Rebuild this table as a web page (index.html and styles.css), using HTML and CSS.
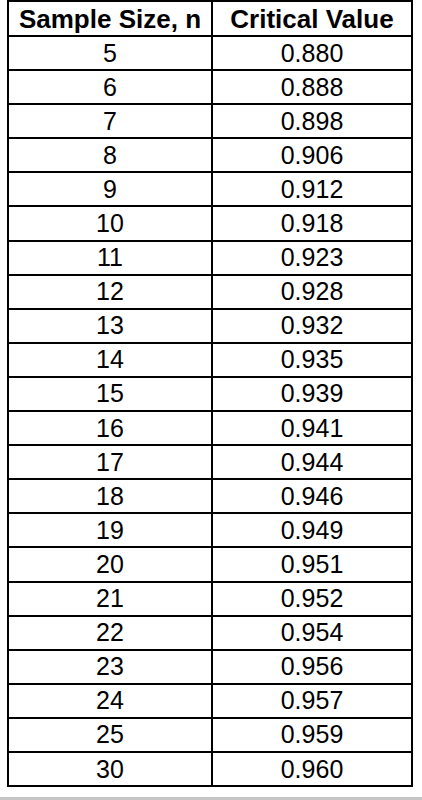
FILE: index.html
```html
<!DOCTYPE html>
<html>
<head>
<meta charset="utf-8">
<link rel="stylesheet" href="styles.css">
</head>
<body>
<table class="cv-table">
<thead>
<tr class="head-row"><th>Sample Size, n</th><th>Critical Value</th></tr>
</thead>
<tbody>
<tr><td>5</td><td>0.880</td></tr>
<tr><td>6</td><td>0.888</td></tr>
<tr><td>7</td><td>0.898</td></tr>
<tr><td>8</td><td>0.906</td></tr>
<tr><td>9</td><td>0.912</td></tr>
<tr><td>10</td><td>0.918</td></tr>
<tr><td>11</td><td>0.923</td></tr>
<tr><td>12</td><td>0.928</td></tr>
<tr><td>13</td><td>0.932</td></tr>
<tr><td>14</td><td>0.935</td></tr>
<tr><td>15</td><td>0.939</td></tr>
<tr><td>16</td><td>0.941</td></tr>
<tr><td>17</td><td>0.944</td></tr>
<tr><td>18</td><td>0.946</td></tr>
<tr><td>19</td><td>0.949</td></tr>
<tr><td>20</td><td>0.951</td></tr>
<tr><td>21</td><td>0.952</td></tr>
<tr><td>22</td><td>0.954</td></tr>
<tr><td>23</td><td>0.956</td></tr>
<tr><td>24</td><td>0.957</td></tr>
<tr><td>25</td><td>0.959</td></tr>
<tr><td>30</td><td>0.960</td></tr>
</tbody>
</table>
<div class="bottom-bar"></div>
</body>
</html>
```
FILE: styles.css
```css
html, body {
  margin: 0;
  padding: 0;
  background: #fff;
}
body {
  font-family: "Liberation Sans", Arial, sans-serif;
  color: #000;
}
.cv-table {
  margin-left: 7px;
  width: 406px;
  border-collapse: collapse;
  table-layout: fixed;
}
.cv-table th, .cv-table td {
  border: 2px solid #000;
  padding: 0;
  text-align: center;
  vertical-align: middle;
  line-height: 1;
}
.cv-table th:first-child, .cv-table td:first-child {
  width: 202px;
}
.cv-table th {
  font-weight: bold;
  font-size: 26px;
}
.head-row {
  height: 35px;
}
.cv-table td {
  font-size: 25px;
}
.cv-table tbody tr {
  height: 34.1px;
}
.bottom-bar {
  margin-top: 10px;
  height: 4px;
  background: #c6c6c6;
}
```
